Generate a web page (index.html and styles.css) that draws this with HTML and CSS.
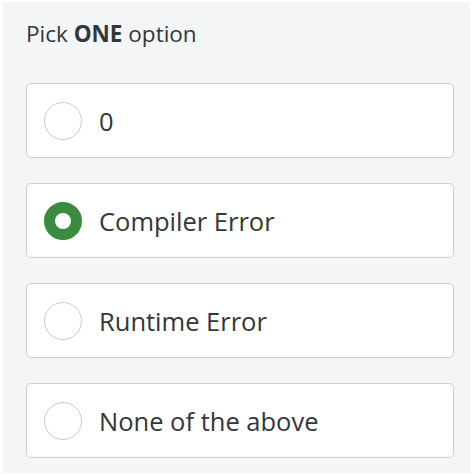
FILE: index.html
```html
<!DOCTYPE html>
<html lang="en">
<head>
    <meta charset="UTF-8">
    <meta name="viewport" content="width=device-width, initial-scale=1.0">
    <title>Pick ONE option</title>
    <link rel="stylesheet" href="styles.css">
</head>
<body>
    <div class="panel">
        <p class="prompt">Pick <strong>ONE</strong> option</p>
        <div class="options">
            <label class="option">
                <span class="radio"></span>
                <span class="label">0</span>
            </label>
            <label class="option">
                <span class="radio checked"></span>
                <span class="label">Compiler Error</span>
            </label>
            <label class="option">
                <span class="radio"></span>
                <span class="label">Runtime Error</span>
            </label>
            <label class="option">
                <span class="radio"></span>
                <span class="label">None of the above</span>
            </label>
        </div>
    </div>
</body>
</html>
```

FILE: styles.css
```css
body {
    font-family: 'Open Sans', 'Liberation Sans', sans-serif;
    margin: 0;
    padding: 0;
    background-color: #fff;
    color: #32373c;
}
.panel {
    margin: 2px 4px 2px 3px;
    height: 471px;
    box-sizing: border-box;
    background-color: #f3f5f7;
    padding: 16px 16px 0 23px;
}
.prompt {
    margin: 0;
    font-size: 22.5px;
    line-height: 32px;
}
.prompt strong {
    font-weight: 700;
}
.options {
    display: flex;
    flex-direction: column;
    gap: 25px;
    margin-top: 33px;
}
.option {
    display: flex;
    align-items: center;
    height: 75px;
    box-sizing: border-box;
    background-color: #fff;
    border: 1px solid #c9ced2;
    border-radius: 5px;
    padding-left: 17px;
    cursor: pointer;
}
.radio {
    width: 38px;
    height: 38px;
    box-sizing: border-box;
    border: 1.5px solid #c6cbcf;
    border-radius: 50%;
    background-color: #fff;
    flex-shrink: 0;
}
.radio.checked {
    border: 11px solid #3a8a3f;
}
.label {
    margin-left: 17px;
    font-size: 25.5px;
}
```
